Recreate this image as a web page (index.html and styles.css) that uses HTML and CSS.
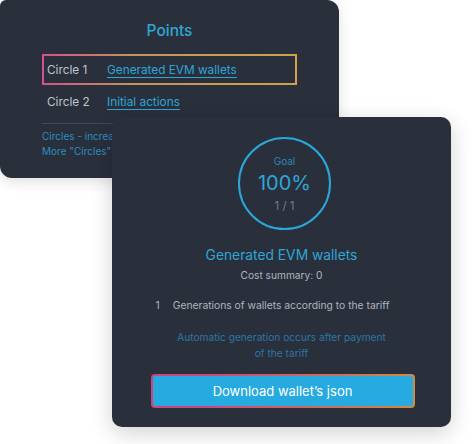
FILE: index.html
```html
<!DOCTYPE html>
<html>
<head>
<meta charset="utf-8">
<link rel="stylesheet" href="styles.css">
</head>
<body>
<div class="stage">
  <section class="card back">
    <h2 class="title">Points</h2>
    <div class="table">
      <div class="row active">
        <span class="label">Circle 1</span>
        <a class="link">Generated EVM wallets</a>
      </div>
      <div class="row">
        <span class="label">Circle 2</span>
        <a class="link">Initial actions</a>
      </div>
    </div>
    <p class="note">Circles - increase your points level.<br>More "Circles" you pass, more points you get.</p>
  </section>
  <section class="card front">
    <div class="goal">
      <span class="goal-label">Goal</span>
      <span class="goal-pct">100%</span>
      <span class="goal-count">1 / 1</span>
    </div>
    <h3 class="front-title">Generated EVM wallets</h3>
    <p class="cost">Cost summary: 0</p>
    <div class="item"><span class="num">1</span><span>Generations of wallets according to the tariff</span></div>
    <p class="auto">Automatic generation occurs after payment<br>of the tariff</p>
    <button class="btn">Download wallet’s json</button>
  </section>
</div>
</body>
</html>
```
FILE: styles.css
```css
* { box-sizing: border-box; }
html, body { margin: 0; padding: 0; background: #ffffff; }
body { font-family: Inter, "Noto Sans", sans-serif; width: 474px; height: 444px; overflow: hidden; }
.stage { position: relative; width: 474px; height: 444px; }
.card { background: #2a2f3c; }
.back {
  width: 339px; height: 178px;
  border-radius: 6px 12px 12px 12px;
  padding: 20px 42px 0 42px;
  box-shadow: 0 4px 14px rgba(0,0,0,0.12);
}
.title {
  margin: 0; text-align: center; font-size: 15.5px; font-weight: 500;
  color: #2ea6d6; line-height: 22px; height: 34px;
}
.table { border-bottom: 1px solid #434957; padding-bottom: 6px; }
.row {
  display: flex; align-items: center; height: 31px; padding-left: 5px;
  font-size: 11.8px; line-height: 16px;
}
.row + .row { margin-top: 1px; }
.row.active {
  border: 2px solid transparent;
  background: linear-gradient(#2a2f3c, #2a2f3c) padding-box,
              linear-gradient(90deg, #d8508e 0%, #c2955a 35%, #d4a04a 100%) border-box;
  padding-left: 3px;
}
.label { color: #c0c4cd; width: 60px; }
.link { color: #2ea6d6; text-decoration: underline; text-underline-offset: 3px; text-decoration-thickness: 1px; }
.note {
  margin: 5px 0 0 0; font-size: 10px; line-height: 15px; color: #2a8ec0;
  white-space: nowrap;
}
.front {
  position: absolute; left: 112px; top: 117px; width: 339px; height: 310px;
  border-radius: 10px; padding-top: 20px;
  display: flex; flex-direction: column; align-items: center;
  box-shadow: 0 6px 22px rgba(0,0,0,0.18);
}
.goal {
  width: 93px; height: 93px; border-radius: 50%; border: 2px solid #29a7d8;
  display: flex; flex-direction: column; align-items: center; justify-content: center;
  margin-left: 6px;
}
.goal-label { font-size: 10px; color: #2d86b3; line-height: 14px; }
.goal-pct { font-size: 20px; color: #2ea6d6; line-height: 26px; margin-top: 2px; }
.goal-count { font-size: 11.5px; color: #757b87; line-height: 16px; margin-top: 2px; }
.front-title {
  margin: 15px 0 0 0; font-size: 13.8px; font-weight: 400; color: #2ea6d6; line-height: 20px;
}
.cost { margin: 2px 0 0 0; font-size: 10.2px; color: #b0b4be; line-height: 16px; }
.item {
  margin-top: 14px; font-size: 10.3px; color: #b0b4be; line-height: 16px;
  display: flex; gap: 13px; margin-right: 18px;
}
.auto {
  margin: 16px 0 0 0; text-align: center; font-size: 10.2px; color: #2a77a4; line-height: 16px;
}
.btn {
  margin-top: 13px; width: 264px; height: 34px; border-radius: 4px;
  border: 2px solid transparent;
  background: linear-gradient(#27aae0, #27aae0) padding-box,
              linear-gradient(90deg, #c9477c 0%, #c9477c 20%, #d08a42 100%) border-box;
  color: #ffffff; font-family: Inter, "Noto Sans", sans-serif; font-size: 13px; font-weight: 400;
  padding: 0; margin-left: 2px;
}
```
